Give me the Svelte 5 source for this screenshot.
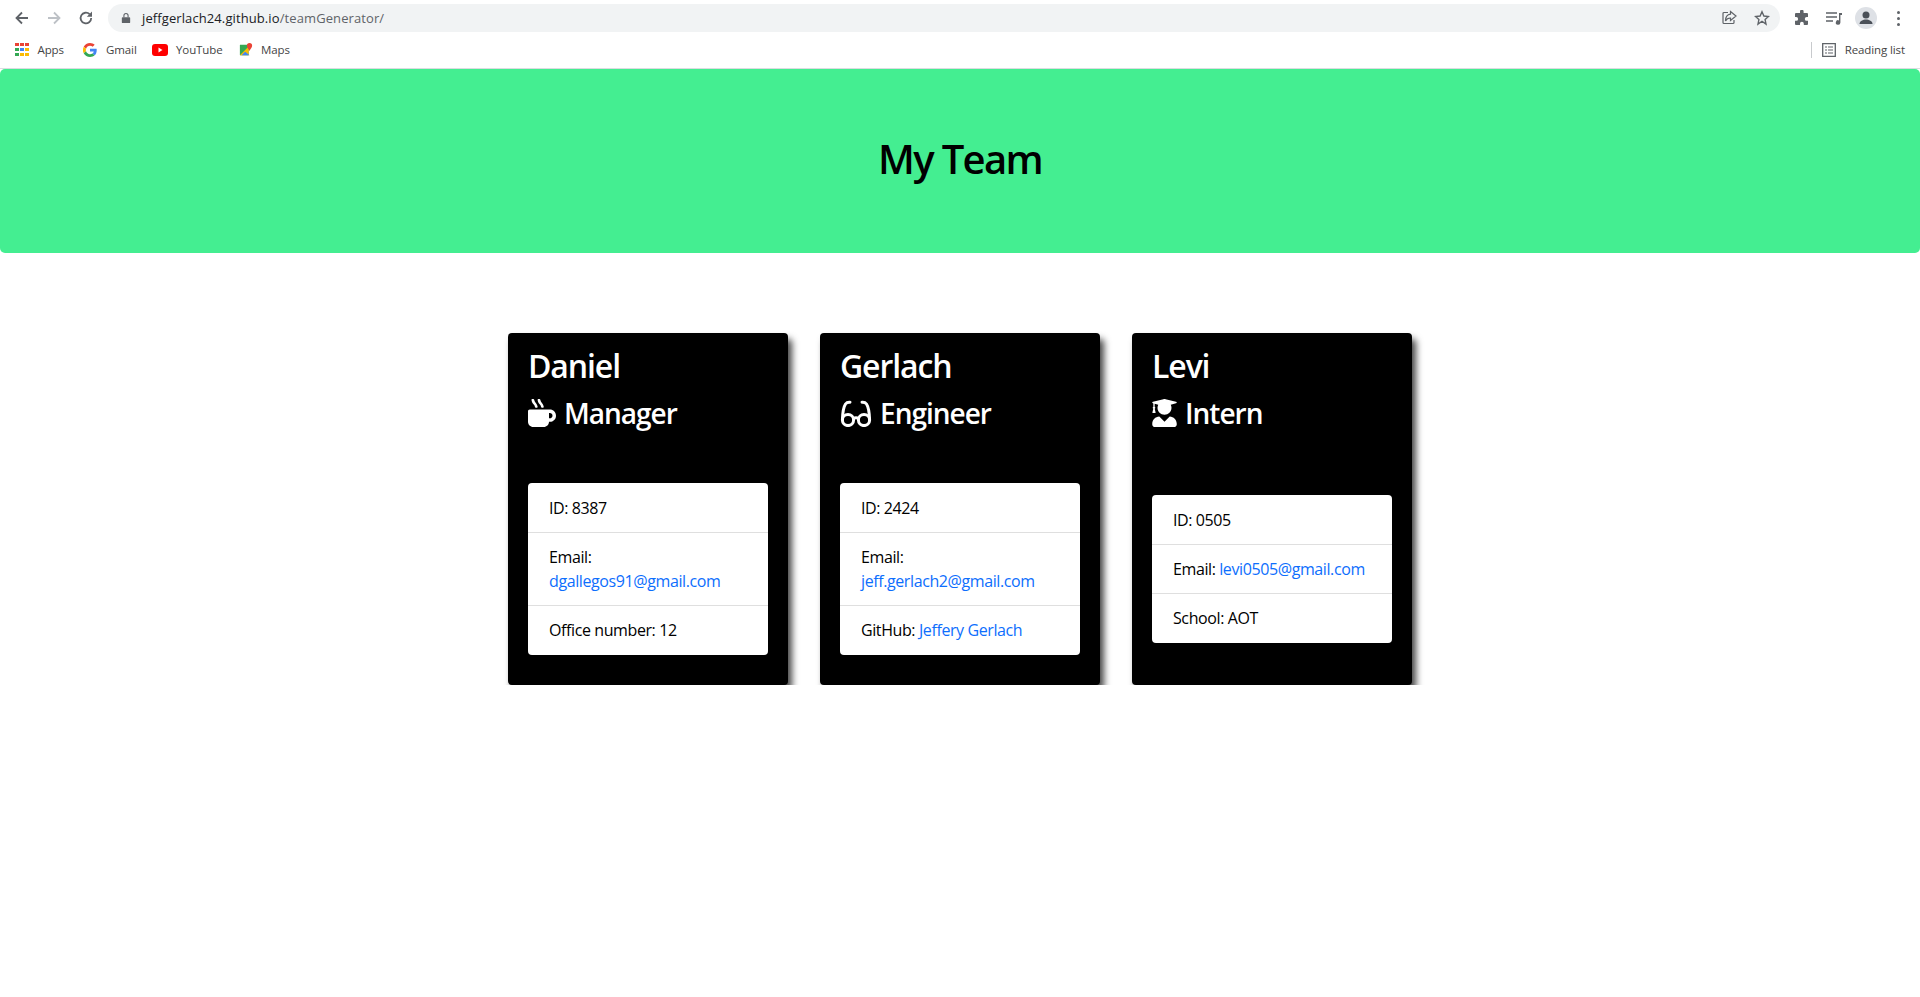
<script>
  const team = [
    { name: 'Daniel', role: 'Manager', icon: 'mug', id: '8387', email: 'dgallegos91@gmail.com', wrap: true, label: 'Office number: ', value: '12' },
    { name: 'Gerlach', role: 'Engineer', icon: 'glasses', id: '2424', email: 'jeff.gerlach2@gmail.com', wrap: true, label: 'GitHub: ', link: 'Jeffery Gerlach' },
    { name: 'Levi', role: 'Intern', icon: 'grad', id: '0505', email: 'levi0505@gmail.com', wrap: false, label: 'School: ', value: 'AOT' }
  ];
  const dots = ['#ea4335','#ea4335','#ea4335','#34a853','#4285f4','#fbbc04','#34a853','#fbbc04','#fbbc04'];
</script>

<div class="chrome">
  <div class="toolbar">
    <svg class="nav first" viewBox="0 0 16 16"><path d="M14 8H3M8 2.500 2.500 8 8 13.500" fill="none" stroke="#5f6368" stroke-width="1.800"/></svg>
    <svg class="nav" viewBox="0 0 16 16"><path d="M2 8h11M8 2.500 13.500 8 8 13.500" fill="none" stroke="#bdc1c6" stroke-width="1.800"/></svg>
    <svg class="nav" viewBox="0 0 16 16"><path d="M13.200 8a5.300 5.300 0 1 1-1.600-3.800" fill="none" stroke="#5f6368" stroke-width="1.800"/><path d="M14 1.500v5.200H8.800z" fill="#5f6368"/></svg>
    <div class="omnibox">
      <svg class="lock" viewBox="0 0 12 14"><path d="M2 6h8a1 1 0 0 1 1 1v5a1 1 0 0 1-1 1H2a1 1 0 0 1-1-1V7a1 1 0 0 1 1-1z" fill="#5f6368"/><path d="M3.500 6V4a2.500 2.500 0 0 1 5 0v2" fill="none" stroke="#5f6368" stroke-width="1.300"/></svg>
      <span class="url"><span class="host">jeffgerlach24.github.io</span>/teamGenerator/</span>
      <svg class="omni-a" viewBox="0 0 16 16"><path d="M7 2.500H3a1 1 0 0 0-1 1v9a1 1 0 0 0 1 1h9a1 1 0 0 0 1-1V10" fill="none" stroke="#5f6368" stroke-width="1.200"/><path d="M9.500 1.500 15 6l-5.500 4.500V8C7 8 5.500 9 4.500 11c0-4 2-6.500 5-6.800z" fill="none" stroke="#5f6368" stroke-width="1.200"/></svg>
      <svg class="omni-b" viewBox="0 0 16 16"><path d="m8 1.800 1.900 4.200 4.600.5-3.400 3.100.9 4.500L8 11.300l-4 2.800.9-4.500L1.500 6.500 6.100 6z" fill="none" stroke="#5f6368" stroke-width="1.400"/></svg>
    </div>
    <svg class="ext" viewBox="0 0 16 16"><path d="M6 1.500a1.800 1.800 0 0 1 3.600 0V3H13a1 1 0 0 1 1 1v3h-1.300a1.900 1.900 0 0 0 0 3.800H14V14a1 1 0 0 1-1 1H9.800v-1.300a1.900 1.900 0 0 0-3.800 0V15H2a1 1 0 0 1-1-1v-3.200h1.200a1.900 1.900 0 0 0 0-3.800H1V4a1 1 0 0 1 1-1h4z" fill="#5f6368"/></svg>
    <svg class="media" viewBox="0 0 18 16"><path d="M1 3h11M1 7h11M1 11h7" stroke="#5f6368" stroke-width="1.500" fill="none"/><path d="M14 3h3v2h-1.600v7.500a2.300 2.300 0 1 1-1.400-2.100z" fill="#5f6368"/></svg>
    <div class="avatar"><svg viewBox="0 0 22 22"><circle cx="11" cy="8" r="3.500" fill="#4a5058"/><path d="M4.500 17c0-3 3.500-4.500 6.500-4.500s6.500 1.500 6.500 4.500z" fill="#4a5058"/></svg></div>
    <div class="kebab"><i></i><i></i><i></i></div>
  </div>
  <div class="bookmarks">
    <div class="bm apps">
      <span class="grid">{#each dots as d}<i style="background:{d}"></i>{/each}</span>
      <span>Apps</span>
    </div>
    <div class="bm gmail">
      <svg viewBox="0 0 48 48" class="fav"><path fill="#EA4335" d="M24 9.500c3.500 0 6.700 1.200 9.200 3.600l6.800-6.800C35.900 2.400 30.500 0 24 0 14.600 0 6.500 5.400 2.600 13.200l8 6.200C12.400 13.700 17.700 9.500 24 9.500z"/><path fill="#4285F4" d="M47 24.500c0-1.600-.1-3.100-.4-4.500H24v9h12.900c-.6 3-2.200 5.500-4.700 7.200l7.700 6c4.500-4.200 7.100-10.300 7.100-17.700z"/><path fill="#FBBC05" d="M10.500 28.700A14.500 14.500 0 0 1 10.500 19.400l-8-6.200a24 24 0 0 0 0 21.600z"/><path fill="#34A853" d="M24 48c6.500 0 11.900-2.100 15.900-5.800l-7.700-6c-2.200 1.400-4.900 2.300-8.200 2.300-6.300 0-11.600-4.200-13.500-9.900l-8 6.200C6.500 42.600 14.600 48 24 48z"/></svg>
      <span>Gmail</span>
    </div>
    <div class="bm yt">
      <svg viewBox="0 0 16 12" class="ytb"><rect width="16" height="12" rx="3" fill="#f00"/><path d="M6.500 3.500v5L10.500 6z" fill="#fff"/></svg>
      <span>YouTube</span>
    </div>
    <div class="bm maps">
      <svg viewBox="0 0 16 16" class="fav"><path d="M1 2h10v12H1z" fill="#34a853"/><path d="M1 14 11 4v10z" fill="#fbbc04"/><path d="M3 14l4-4 5 4z" fill="#4285f4"/><path d="M12 0a3 3 0 0 1 3 3c0 2-2 3.500-3 6-1-2.500-3-4-3-6a3 3 0 0 1 3-3z" fill="#ea4335"/></svg>
      <span>Maps</span>
    </div>
    <div class="reading">
      <svg viewBox="0 0 14 14" class="rl"><path d="M.7.700h12.600v12.600H.7z" fill="none" stroke="#5f6368" stroke-width="1.300"/><path d="M3 4h2M6 4h5M3 7h2M6 7h5M3 10h2M6 10h5" stroke="#5f6368" stroke-width="1.200"/></svg>
      <span>Reading list</span>
    </div>
  </div>
</div>

<header class="hero"><h1>My Team</h1></header>

<main class="team">
  {#each team as m}
    <article class="card">
      <div class="head">
        <h2>{m.name}</h2>
        <h3>
          {#if m.icon === 'mug'}
            <svg class="mug" viewBox="0 0 512 512"><path fill="#fff" d="M127.100 146.500c1.300 7.700 8 13.500 16 13.500h16.500c9.800 0 17.600-8.500 16.300-18-3.800-28.200-16.400-54.200-36.600-74.700-14.400-14.700-23.600-33.300-26.400-53.500C111.800 5.900 105 0 96.800 0H80.400C70.600 0 63 8.500 64.100 18c3.900 31.900 18 61.300 40.600 84.400 12 12.200 19.700 27.500 22.400 44.100zm112 0c1.300 7.700 8 13.500 16 13.500h16.500c9.800 0 17.600-8.500 16.300-18-3.800-28.200-16.400-54.200-36.600-74.700-14.400-14.700-23.600-33.300-26.400-53.500C223.800 5.900 217 0 208.800 0h-16.400c-9.800 0-17.500 8.500-16.300 18 3.900 31.900 18 61.300 40.600 84.400 12 12.200 19.700 27.500 22.400 44.100zM400 192H32c-17.700 0-32 14.300-32 32v192c0 53 43 96 96 96h192c53 0 96-43 96-96h16c61.800 0 112-50.200 112-112s-50.200-112-112-112zm0 160h-16V256h16c26.500 0 48 21.500 48 48s-21.500 48-48 48z"/></svg>
          {:else if m.icon === 'glasses'}
            <svg class="glasses" viewBox="0 0 32 28"><g fill="none" stroke="#fff" stroke-width="3" stroke-linecap="round"><circle cx="8" cy="21" r="5.600"/><circle cx="24" cy="21" r="5.600"/><path d="M13.500 19.500c1.500-1 3.500-1 5 0"/><path d="M2.400 21C2.600 14 3.500 8 5.500 5 6.500 3.600 8 3 10 3.200"/><path d="M29.600 21C29.400 14 28.500 8 26.500 5 25.500 3.600 24 3 22 3.200"/></g></svg>
          {:else}
            <svg class="grad" viewBox="0 0 448 512"><path fill="#fff" d="M319.400 320.600L224 416l-95.400-95.400C57.100 323.700 0 382.200 0 454.400v9.600c0 26.500 21.500 48 48 48h352c26.500 0 48-21.500 48-48v-9.600c0-72.200-57.100-130.700-128.600-133.800zM13.600 79.800l6.400 1.500v58.400c-7 4.200-12 11.500-12 20.300 0 8.400 4.600 15.400 11.100 19.700L3.500 242c-1.700 6.900 2.100 14 7.600 14h41.800c5.500 0 9.300-7.100 7.600-14l-15.600-62.300C51.400 175.400 56 168.400 56 160c0-8.800-5-16.100-12-20.300V87.100l66 15.900c-8.600 17.200-14 36.400-14 57 0 70.700 57.300 128 128 128s128-57.300 128-128c0-20.600-5.300-39.800-14-57l96.300-23.200c18.200-4.400 18.200-27.100 0-31.500l-190.400-46c-13-3.100-26.700-3.100-39.700 0L13.600 48.200c-18.100 4.400-18.100 27.200 0 31.600z"/></svg>
          {/if}
          <span>{m.role}</span>
        </h3>
      </div>
      <div class="body">
        <ul>
          <li>ID: {m.id}</li>
          <li>Email: {#if m.wrap}<br />{/if}<a href="#top">{m.email}</a></li>
          <li>{m.label}{#if m.link}<a href="#top">{m.link}</a>{:else}{m.value}{/if}</li>
        </ul>
      </div>
    </article>
  {/each}
</main>

<style>
  :global(body) {
    margin: 0;
    background: #fff;
    font-family: "Open Sans", "Noto Sans", sans-serif;
  }
  .chrome { height: 68px; background: #fff; border-bottom: 1px solid #dadce0; }
  .toolbar { height: 36px; display: flex; align-items: center; }
  .nav { width: 16px; height: 16px; margin-left: 16px; flex: none; }
  .nav.first { margin-left: 14px; }
  .omnibox {
    margin-left: 14px; width: 1672px; height: 28px; border-radius: 14px; background: #f1f3f4;
    display: flex; align-items: center; flex: none;
  }
  .lock { width: 10px; height: 12px; margin-left: 13px; }
  .url { margin-left: 11px; font-size: 13px; color: #5f6368; letter-spacing: 0.1px; flex: 1; }
  .host { color: #202124; }
  .omni-a { width: 16px; height: 16px; margin-right: 17px; }
  .omni-b { width: 16px; height: 16px; margin-right: 10px; }
  .ext { width: 16px; height: 16px; margin-left: 14px; flex: none; }
  .media { width: 18px; height: 16px; margin-left: 15px; flex: none; }
  .avatar { width: 22px; height: 22px; border-radius: 50%; background: #dee1e6; margin-left: 12px; flex: none; }
  .avatar svg { width: 22px; height: 22px; display: block; }
  .kebab { margin-left: 20px; display: flex; flex-direction: column; gap: 3px; flex: none; }
  .kebab i { width: 3px; height: 3px; border-radius: 50%; background: #5f6368; display: block; }

  .bookmarks { height: 27px; padding-bottom: 5px; display: flex; align-items: center; font-size: 11.500px; color: #444; letter-spacing: -0.1px; }
  .bm { display: flex; align-items: center; flex: none; }
  .apps { margin-left: 15px; gap: 9px; width: 68px; }
  .gmail { gap: 9px; width: 69px; }
  .yt { gap: 8px; width: 87px; }
  .maps { gap: 8px; }
  .grid { display: grid; grid-template-columns: repeat(3, 3.500px); gap: 1.500px; }
  .grid i { width: 3.500px; height: 3.500px; display: block; }
  .fav { width: 14px; height: 14px; }
  .ytb { width: 16px; height: 12px; }
  .reading { margin-left: auto; height: 16px; display: flex; align-items: center; gap: 9px; border-left: 1px solid #c8cacd; padding-left: 10px; margin-right: 15px; }
  .rl { width: 14px; height: 14px; }

  .hero {
    height: 184px; background: #44ee91; border-radius: 5px;
    display: flex; align-items: center; justify-content: center;
  }
  h1 { margin: 0 0 5px; font-size: 40px; font-weight: 600; color: #000; line-height: 48px; letter-spacing: -1.700px; }

  .team { display: flex; justify-content: center; gap: 32px; margin-top: 80px; }
  .card {
    width: 280px; box-sizing: border-box; background: #000; color: #fff; border-radius: 4px;
    padding: 20px 20px 19px; display: flex; flex-direction: column;
    box-shadow: 4px 6px 7px #444;
  }
  .head { height: 119px; }
  h2 { margin: -6px 0 0; font-size: 32px; font-weight: 600; line-height: 38px; letter-spacing: -1.100px; }
  h3 {
    margin: 11px 0 0; font-size: 28px; font-weight: 600; line-height: 34px; letter-spacing: -1px;
    display: flex; align-items: center; gap: 8px;
  }
  h3 svg { height: 28px; flex: none; }
  .mug { width: 28px; }
  .glasses { width: 32px; }
  .grad { width: 25px; }
  .body { flex: 1; display: flex; align-items: center; padding: 11px 0; }
  ul {
    list-style: none; margin: 0; padding: 1px 0; width: 100%;
    background: #fff; color: #000; border-radius: 4px; font-size: 16px; line-height: 24px; letter-spacing: -0.4px;
  }
  li { padding: 12px 21px; border-bottom: 1px solid #dfdfdf; }
  li:last-child { border-bottom: 0; }
  a { color: #0d6efd; text-decoration: none; }
</style>
